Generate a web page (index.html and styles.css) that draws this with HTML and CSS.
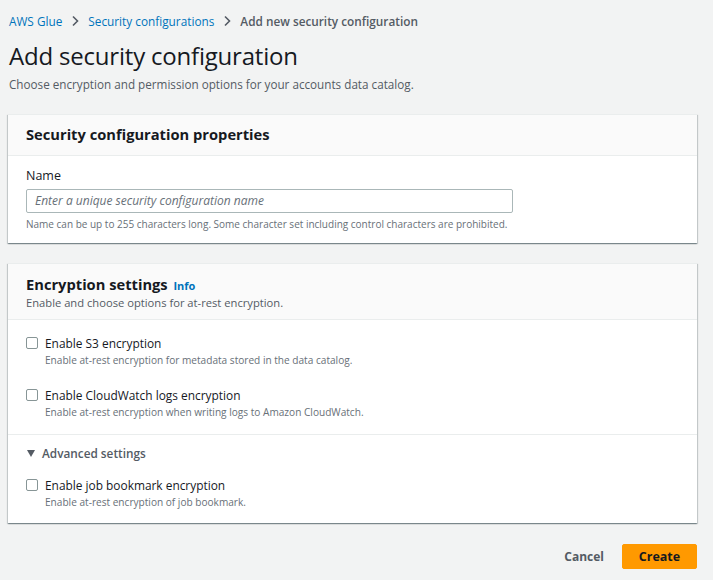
FILE: index.html
```html
<!DOCTYPE html>
<html lang="en">
<head>
<meta charset="utf-8">
<title>Add security configuration</title>
<link rel="stylesheet" href="styles.css">
</head>
<body>
<div class="page">
  <nav class="crumbs">
    <a class="crumb-link">AWS Glue</a>
    <svg class="crumb-sep" viewBox="0 0 10 12" width="10" height="12"><path d="M3 1.5 L7.5 6 L3 10.5" fill="none" stroke="#545b64" stroke-width="1.6"/></svg>
    <a class="crumb-link">Security configurations</a>
    <svg class="crumb-sep" viewBox="0 0 10 12" width="10" height="12"><path d="M3 1.5 L7.5 6 L3 10.5" fill="none" stroke="#545b64" stroke-width="1.6"/></svg>
    <span class="crumb-current">Add new security configuration</span>
  </nav>

  <h1 class="title">Add security configuration</h1>
  <p class="subtitle">Choose encryption and permission options for your accounts data catalog.</p>

  <section class="card card-props">
    <header class="card-head">
      <h2 class="card-title">Security configuration properties</h2>
    </header>
    <div class="card-body">
      <label class="field-label">Name</label>
      <div class="input">Enter a unique security configuration name</div>
      <p class="hint">Name can be up to 255 characters long. Some character set including control characters are prohibited.</p>
    </div>
  </section>

  <section class="card card-enc">
    <header class="card-head head-tall">
      <h2 class="card-title">Encryption settings <span class="info">Info</span></h2>
      <p class="head-desc">Enable and choose options for at-rest encryption.</p>
    </header>
    <div class="enc-body">
      <div class="check-row">
        <span class="box"></span>
        <div>
          <div class="check-label">Enable S3 encryption</div>
          <div class="check-desc">Enable at-rest encryption for metadata stored in the data catalog.</div>
        </div>
      </div>
      <div class="check-row">
        <span class="box"></span>
        <div>
          <div class="check-label">Enable CloudWatch logs encryption</div>
          <div class="check-desc">Enable at-rest encryption when writing logs to Amazon CloudWatch.</div>
        </div>
      </div>
    </div>
    <div class="advanced">
      <div class="adv-toggle"><span class="tri"></span>Advanced settings</div>
      <div class="check-row">
        <span class="box"></span>
        <div>
          <div class="check-label">Enable job bookmark encryption</div>
          <div class="check-desc">Enable at-rest encryption of job bookmark.</div>
        </div>
      </div>
    </div>
  </section>

  <div class="actions">
    <button class="btn-link">Cancel</button>
    <button class="btn-primary">Create</button>
  </div>
</div>
</body>
</html>
```

FILE: styles.css
```css
* { box-sizing: border-box; }
html, body { margin: 0; padding: 0; }
body {
  background: #f2f3f3;
  font-family: "Open Sans", "Noto Sans", sans-serif;
  color: #16191f;
  width: 713px;
  height: 580px;
  overflow: hidden;
}
.page {
  padding: 12px 16px 0 8px;
}
.crumbs {
  display: flex;
  align-items: center;
  gap: 8px;
  font-size: 11.8px;
  height: 18px;
  padding-left: 1px;
}
.crumb-link { color: #0073bb; }
.crumb-current { color: #545b64; font-weight: 600; }
.crumb-sep { display: block; }
.title {
  margin: 10px 0 0 1px;
  font-size: 24px;
  font-weight: 400;
  line-height: 32px;
  letter-spacing: -0.2px;
}
.subtitle {
  margin: 4px 0 0 1px;
  font-size: 11.7px;
  line-height: 16px;
  color: #545b64;
}
.card {
  background: #fff;
  box-shadow: 0 1px 1px 0 rgba(0, 28, 36, 0.3), 1px 1px 1px 0 rgba(0, 28, 36, 0.15), -1px 1px 1px 0 rgba(0, 28, 36, 0.15);
  border-top: 1px solid #eaeded;
}
.card-props { margin-top: 22px; }
.card-enc { margin-top: 20px; }
.card-head {
  background: #fafafa;
  border-bottom: 1px solid #eaeded;
  padding: 9px 18px 0;
  height: 41px;
}
.head-tall { height: 56px; padding-top: 10px; }
.card-title {
  margin: 0;
  font-size: 14.7px;
  font-weight: 700;
  line-height: 20px;
}
.info {
  font-size: 11px;
  color: #0073bb;
  font-weight: 700;
  margin-left: 2px;
}
.head-desc {
  margin: 0;
  font-size: 11.2px;
  line-height: 14px;
  color: #545b64;
}
.card-body {
  padding: 11px 18px 12px;
}
.field-label {
  display: block;
  font-size: 12.5px;
  line-height: 18px;
}
.input {
  margin-top: 4px;
  width: 487px;
  height: 24px;
  border: 1px solid #aab7b8;
  border-radius: 2px;
  padding: 0 8px;
  font-size: 12px;
  line-height: 22px;
  font-style: italic;
  color: #687078;
}
.hint {
  margin: 4px 0 0;
  font-size: 10px;
  line-height: 14px;
  color: #687078;
}
.enc-body {
  padding: 15px 18px 15px;
  border-bottom: 1px solid #eaeded;
}
.check-row {
  display: flex;
  gap: 7px;
  align-items: flex-start;
  margin-bottom: 20px;
}
.check-row:last-child { margin-bottom: 0; }
.box {
  flex: none;
  width: 12px;
  height: 12px;
  margin-top: 2px;
  border: 1px solid #879596;
  border-radius: 2px;
  background: #fff;
}
.check-label {
  font-size: 11.9px;
  line-height: 17px;
}
.check-desc {
  font-size: 10.1px;
  line-height: 14px;
  color: #687078;
  margin-top: 1px;
}
.advanced {
  padding: 10px 18px 14px;
}
.adv-toggle {
  display: flex;
  align-items: center;
  gap: 7px;
  font-size: 11.8px;
  line-height: 16px;
  color: #545b64;
  font-weight: 600;
  margin-bottom: 16px;
}
.tri {
  width: 0;
  height: 0;
  border-left: 4px solid transparent;
  border-right: 4px solid transparent;
  border-top: 7px solid #545b64;
  margin-left: 1px;
}
.actions {
  display: flex;
  justify-content: flex-end;
  align-items: center;
  gap: 18px;
  margin-top: 21px;
}
.btn-link {
  background: none;
  border: none;
  font-family: inherit;
  font-size: 12px;
  font-weight: 700;
  color: #545b64;
  padding: 0;
}
.btn-primary {
  font-family: inherit;
  background: #ff9900;
  border: 1px solid #ff9900;
  border-radius: 2px;
  width: 75px;
  height: 25px;
  font-size: 12.5px;
  font-weight: 700;
  color: #16191f;
  padding: 0;
}
```
